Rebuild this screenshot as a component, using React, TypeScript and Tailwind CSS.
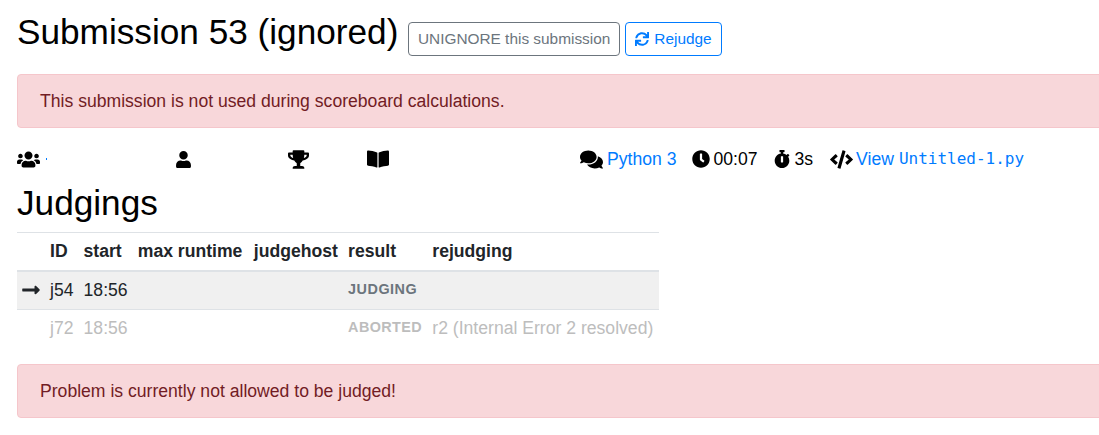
import { FaBookOpen, FaClock, FaCode, FaComments, FaLongArrowAltRight, FaStopwatch, FaSync, FaTrophy, FaUser, FaUsers } from 'react-icons/fa'

const th = 'px-[5px] h-[38px] text-left font-bold text-[#212529] whitespace-nowrap'
const td = 'px-[5px] whitespace-nowrap'

function Alert({ text }: { text: string }) {
  return (
    <div className="w-[1110px] rounded border border-[#f5c6cb] bg-[#f8d7da] px-[22px] py-[13px] leading-[26px] text-[#721c24]">
      {text}
    </div>
  )
}

export default function App() {
  return (
    <div className="h-[435px] w-[1099px] overflow-hidden bg-white pl-[17px] text-[17.6px] text-[#212529] [font-family:'Liberation_Sans',Arial,sans-serif]">
      <div className="flex items-start pt-[11px]">
        <h1 className="text-[35.2px] leading-[42px] text-black">Submission 53 (ignored)</h1>
        <div className="mt-[11px] ml-[10px] flex gap-[5px]">
          <button className="h-[34px] rounded border border-[#6c757d] px-[8.5px] text-[15.4px] text-[#6c757d]">
            UNIGNORE this submission
          </button>
          <button className="flex h-[34px] items-center gap-[5px] rounded border border-[#007bff] px-[9.5px] text-[15.4px] text-[#007bff]">
            <FaSync size={14} />
            Rejudge
          </button>
        </div>
      </div>

      <div className="mt-[18px]">
        <Alert text="This submission is not used during scoreboard calculations." />
      </div>

      <div className="mt-[18px] flex h-[26px] items-center text-black">
        <FaUsers size={23} className="w-[23px]" />
        <span className="ml-[6px] h-[2px] w-[1px] bg-[#007bff]" />
        <FaUser size={17} className="ml-[128px]" />
        <FaTrophy size={21} className="ml-[96px]" />
        <FaBookOpen size={22} className="ml-[58px]" />
        <FaComments size={23} className="ml-[191px]" />
        <span className="ml-[4px] text-[#007bff]">Python 3</span>
        <FaClock size={18} className="ml-[16px]" />
        <span className="ml-[3px]">00:07</span>
        <FaStopwatch size={18} className="ml-[16px]" />
        <span className="ml-[3px]">3s</span>
        <FaCode size={23} className="ml-[17px]" />
        <span className="ml-[3px] text-[#007bff]">View</span>
        <span className="ml-[5px] text-[16px] text-[#007bff] [font-family:'DejaVu_Sans_Mono',monospace]">Untitled-1.py</span>
      </div>

      <h2 className="mt-[10px] text-[35.2px] leading-[42px] text-black">Judgings</h2>

      <table className="mt-[8px] w-[642px] border-collapse">
        <thead>
          <tr className="border-t border-b-2 border-[#dee2e6]">
            <th className="w-[28px] px-[4px]" />
            <th className={th}>ID</th>
            <th className={th}>start</th>
            <th className={`${th} w-[116px]`}>max runtime</th>
            <th className={th}>judgehost</th>
            <th className={th}>result</th>
            <th className={th}>rejudging</th>
          </tr>
        </thead>
        <tbody>
          <tr className="h-[39px] border-b border-[#dee2e6] bg-[#f0f0f0]">
            <td className="px-[4px]">
              <FaLongArrowAltRight size={20} className="text-[#212529]" />
            </td>
            <td className={td}>j54</td>
            <td className={td}>18:56</td>
            <td className={td} />
            <td className={td} />
            <td className={`${td} text-[14.4px] font-bold tracking-[0.5px] text-[#6c757d]`}>JUDGING</td>
            <td className={td} />
          </tr>
          <tr className="h-[37px] text-[#bdbdbd]">
            <td className="px-[4px]" />
            <td className={td}>j72</td>
            <td className={td}>18:56</td>
            <td className={td} />
            <td className={td} />
            <td className={`${td} text-[14.4px] font-bold tracking-[0.4px]`}>ABORTED</td>
            <td className={td}>r2 (Internal Error 2 resolved)</td>
          </tr>
        </tbody>
      </table>

      <div className="mt-[17px]">
        <Alert text="Problem is currently not allowed to be judged!" />
      </div>
    </div>
  )
}
